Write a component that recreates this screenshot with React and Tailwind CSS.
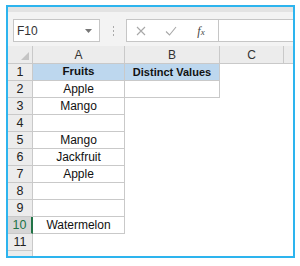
import React from "react";

const rows = [
  { n: 1, a: "Fruits", b: "Distinct Values", head: true },
  { n: 2, a: "Apple", b: "" },
  { n: 3, a: "Mango" },
  { n: 4, a: "" },
  { n: 5, a: "Mango" },
  { n: 6, a: "Jackfruit" },
  { n: 7, a: "Apple" },
  { n: 8, a: "" },
  { n: 9, a: "" },
  { n: 10, a: "Watermelon", sel: true },
  { n: 11, a: null },
];

export default function App() {
  return (
    <div className="w-[300px] h-[266px] bg-white pt-[5px] pl-[6px]" style={{ fontFamily: '"Liberation Sans", Arial, sans-serif' }}>
      <div className="w-[289px] h-[253px] border-2 border-[#2db4ee] bg-white flex flex-col overflow-hidden">
        {/* toolbar */}
        <div className="h-[39px] bg-[#f3f3f3] flex flex-col shrink-0">
          <div className="h-[5px] bg-[#e3e3e3]" />
          <div className="flex items-start pt-[7px] pl-[5px]">
            <div className="w-[87px] h-[23px] bg-white border border-[#c6c6c6] flex items-center justify-between pl-[3px] pr-[7px]">
              <span className="text-[12px] text-[#333]">F10</span>
              <svg width="7" height="4" viewBox="0 0 7 4"><path d="M0 0h7L3.5 4z" fill="#777" /></svg>
            </div>
            <div className="w-[26px] h-[23px] flex flex-col items-center justify-center gap-[2px]">
              <span className="w-[1px] h-[2px] bg-[#aaa]" />
              <span className="w-[1px] h-[2px] bg-[#aaa]" />
              <span className="w-[1px] h-[2px] bg-[#aaa]" />
            </div>
            <div className="w-[93px] h-[23px] bg-white border border-[#c6c6c6] flex items-center">
              <div className="w-[28px] flex justify-center">
                <svg width="10" height="10" viewBox="0 0 10 10"><path d="M1 1L9 9M9 1L1 9" stroke="#a8a8a8" strokeWidth="1.1" /></svg>
              </div>
              <div className="w-[32px] flex justify-center">
                <svg width="12" height="10" viewBox="0 0 12 10"><path d="M1 5.5L4.5 9L11 1" stroke="#a8a8a8" strokeWidth="1.1" fill="none" /></svg>
              </div>
              <div className="w-[28px] flex justify-center">
                <span className="text-[12px] italic text-[#444]" style={{ fontFamily: '"Liberation Serif", serif' }}>f<span className="text-[9px]">x</span></span>
              </div>
            </div>
            <div className="flex-1 h-[23px] bg-white border border-l-0 border-[#c6c6c6] border-r-0" />
          </div>
        </div>
        {/* grid */}
        <div className="grid grid-cols-[25px_92px_95px_64px_1fr] grid-rows-[18px_repeat(11,17px)_1fr] flex-1 text-[12px] text-[#111]">
          {/* header row */}
          <div className="bg-[#ececec] border-r border-b border-[#c9c9c9] relative">
            <svg className="absolute right-[3px] bottom-[3px]" width="8" height="8" viewBox="0 0 8 8"><path d="M8 0V8H0z" fill="#c4c4c4" /></svg>
          </div>
          <div className="bg-[#ececec] border-r border-b border-[#c9c9c9] flex items-center justify-center text-[#333]">A</div>
          <div className="bg-[#ececec] border-r border-b border-[#c9c9c9] flex items-center justify-center text-[#333]">B</div>
          <div className="bg-[#ececec] border-r border-b border-[#c9c9c9] flex items-center justify-center text-[#333]">C</div>
          <div className="bg-[#ececec] border-b border-[#c9c9c9]" />
          {rows.map((r) => (
            <React.Fragment key={r.n}>
              <div
                className={
                  r.sel
                    ? "bg-[#d6d6d6] border-r-2 border-r-[#217346] border-b border-b-[#c9c9c9] flex items-center justify-center text-[12.5px] text-[#217346]"
                    : "bg-[#ececec] border-r border-b border-[#c9c9c9] flex items-center justify-center text-[12.5px] text-[#222]"
                }
              >
                {r.n}
              </div>
              {r.a === null ? (
                <div />
              ) : (
                <div
                  className={
                    "border-r border-b border-[#c9c9c9] flex items-center justify-center " +
                    (r.head ? "bg-[#bdd7ee] font-bold text-[11.5px]" : "")
                  }
                >
                  {r.a}
                </div>
              )}
              {r.b !== undefined ? (
                <div
                  className={
                    "border-r border-b border-[#c9c9c9] flex items-center justify-center " +
                    (r.head ? "bg-[#bdd7ee] font-bold text-[11px]" : "")
                  }
                >
                  {r.b}
                </div>
              ) : (
                <div />
              )}
              <div />
              <div />
            </React.Fragment>
          ))}
          <div className="bg-[#ececec] border-r border-[#c9c9c9]" />
          <div />
          <div />
          <div />
          <div />
        </div>
      </div>
    </div>
  );
}
